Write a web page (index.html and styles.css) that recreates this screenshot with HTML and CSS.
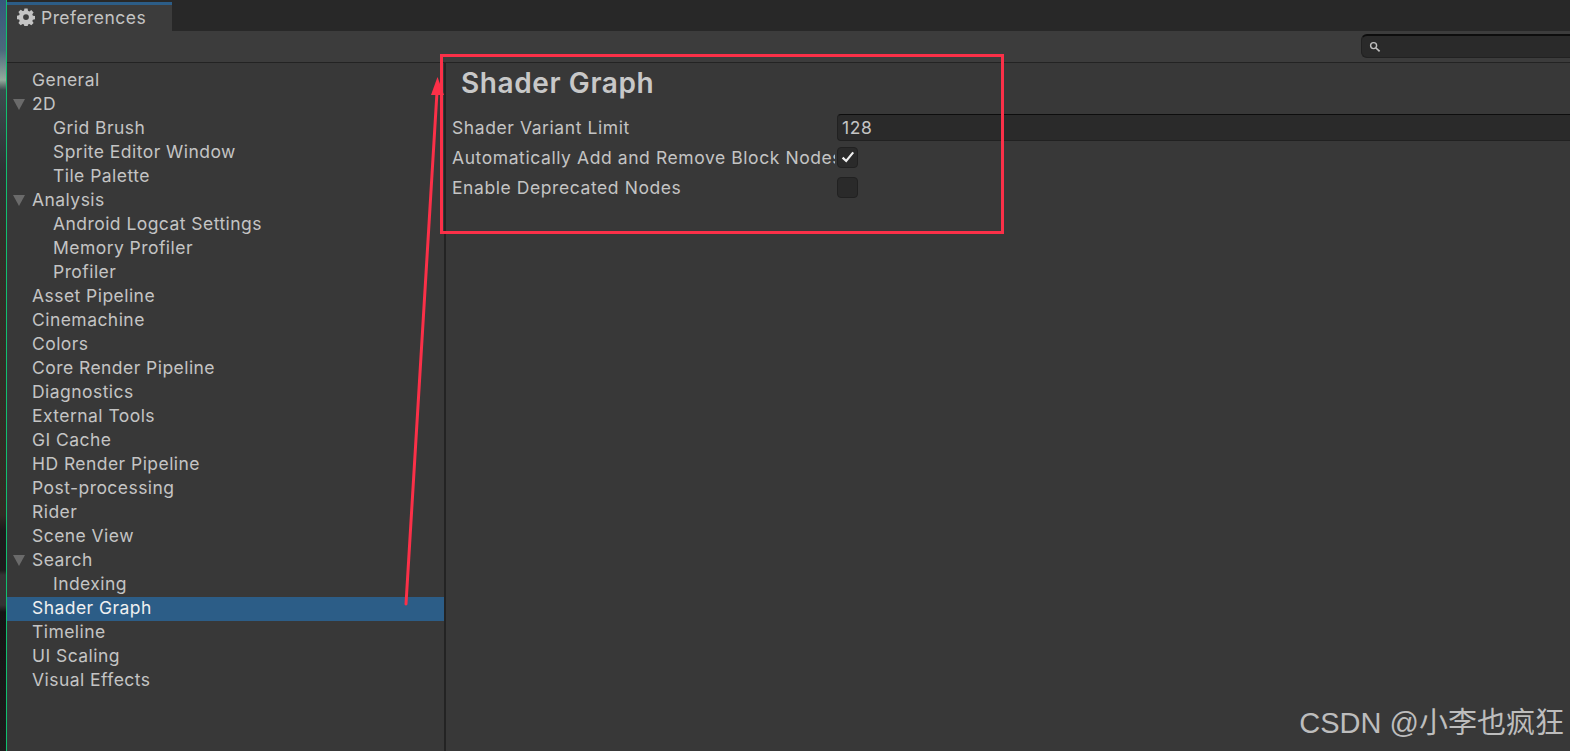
FILE: index.html
```html
<!DOCTYPE html>
<html lang="en">
<head>
    <meta charset="UTF-8">
    <title>Preferences</title>
    <link rel="stylesheet" href="styles.css">
</head>
<body>
    <div class="desktop-strip"></div>
    <div class="window">
        <div class="tab-bar">
            <div class="tab">
                <svg class="tab-icon" viewBox="0 0 18 18" width="18" height="18">
                    <path fill="#c4c4c4" fill-rule="evenodd" d="M7.4 0.5h3.2l.4 2.3 1.4.6 1.9-1.3 2.3 2.3-1.3 1.9.6 1.4 2.3.4v3.2l-2.3.4-.6 1.4 1.3 1.9-2.3 2.3-1.9-1.3-1.4.6-.4 2.3H7.4L7 16.5l-1.4-.6-1.9 1.3-2.3-2.3 1.3-1.9-.6-1.4-2.3-.4V7.7L2.1 7.3l.6-1.4L1.4 4l2.3-2.3 1.9 1.3L7 2.8zM9 6.2a2.9 2.9 0 1 0 0 5.8 2.9 2.9 0 0 0 0-5.8z"/>
                </svg>
                <span>Preferences</span>
            </div>
        </div>
        <div class="toolbar">
            <div class="search">
                <svg viewBox="0 0 12 12" width="12" height="12">
                    <circle cx="4.6" cy="4.6" r="3" fill="none" stroke="#c0c0c0" stroke-width="1.4"/>
                    <path d="M7 7l3.6 3.4" stroke="#c0c0c0" stroke-width="1.7"/>
                </svg>
            </div>
        </div>
        <div class="panes">
            <ul class="tree">
                <li class="tree-item">General</li>
                <li class="tree-item has-children">2D</li>
                <li class="tree-item child">Grid Brush</li>
                <li class="tree-item child">Sprite Editor Window</li>
                <li class="tree-item child">Tile Palette</li>
                <li class="tree-item has-children">Analysis</li>
                <li class="tree-item child">Android Logcat Settings</li>
                <li class="tree-item child">Memory Profiler</li>
                <li class="tree-item child">Profiler</li>
                <li class="tree-item">Asset Pipeline</li>
                <li class="tree-item">Cinemachine</li>
                <li class="tree-item">Colors</li>
                <li class="tree-item">Core Render Pipeline</li>
                <li class="tree-item">Diagnostics</li>
                <li class="tree-item">External Tools</li>
                <li class="tree-item">GI Cache</li>
                <li class="tree-item">HD Render Pipeline</li>
                <li class="tree-item">Post-processing</li>
                <li class="tree-item">Rider</li>
                <li class="tree-item">Scene View</li>
                <li class="tree-item has-children">Search</li>
                <li class="tree-item child">Indexing</li>
                <li class="tree-item selected">Shader Graph</li>
                <li class="tree-item">Timeline</li>
                <li class="tree-item">UI Scaling</li>
                <li class="tree-item">Visual Effects</li>
            </ul>
            <div class="settings">
                <h1>Shader Graph</h1>
                <div class="field">
                    <label>Shader Variant Limit</label>
                    <div class="text-input">128</div>
                </div>
                <div class="field">
                    <label>Automatically Add and Remove Block Nodes</label>
                    <div class="checkbox">
                        <svg viewBox="0 0 14 14" width="14" height="14">
                            <path d="M1.6 7.6l3.6 3.4 7-8.6" fill="none" stroke="#efefef" stroke-width="2.2"/>
                        </svg>
                    </div>
                </div>
                <div class="field">
                    <label>Enable Deprecated Nodes</label>
                    <div class="checkbox"></div>
                </div>
            </div>
        </div>
    </div>

    <!-- red markup drawn over the screenshot -->
    <div class="markup-box"></div>
    <svg class="markup-arrow" width="60" height="540" viewBox="0 0 60 540">
        <path d="M6 530L37 18" stroke="#fb3048" stroke-width="3" stroke-linecap="round"/>
        <path d="M37.5 3L44 21 31 21z" fill="#fb3048"/>
    </svg>
    <div class="watermark">CSDN @小李也疯狂</div>
</body>
</html>
```

FILE: styles.css
```css
* {
    margin: 0;
    padding: 0;
    box-sizing: border-box;
}

body {
    width: 1570px;
    height: 751px;
    overflow: hidden;
    display: flex;
    background-color: #383838;
    color: #c4c4c4;
    font-family: Inter, "Noto Sans", sans-serif;
    font-size: 17.5px;
    letter-spacing: 0.45px;
}

.desktop-strip {
    width: 7px;
    flex-shrink: 0;
    border-right: 1px solid #10c070;
    background: linear-gradient(to bottom, #36587c 0, #4a6a7c 50px, #93aa9c 80px, #3c4c4e 90px, #2e3234 170px, #322e28 240px, #302c24 515px, #1c1c1c 530px, #1c1c1c 570px, #343434 575px, #343434 605px, #141414 612px, #1c1c1c 751px);
}

.window {
    flex: 1;
    display: flex;
    flex-direction: column;
    min-width: 0;
}

.tab-bar {
    height: 31px;
    padding-top: 2px;
    background-color: #282828;
    flex-shrink: 0;
}

.tab {
    width: 165px;
    height: 29px;
    display: flex;
    align-items: center;
    gap: 6px;
    padding: 0 0 2px 10px;
    background-color: #3c3c3c;
    border-top: 3px solid #2c5d87;
}

.toolbar {
    height: 32px;
    flex-shrink: 0;
    display: flex;
    justify-content: flex-end;
    align-items: flex-start;
    padding-top: 3px;
    background-color: #3c3c3c;
    border-bottom: 1px solid #232323;
}

.search {
    width: 209px;
    height: 24px;
    display: flex;
    align-items: center;
    padding-left: 7px;
    background-color: #2a2a2a;
    border: 1px solid #212121;
    border-top: 2px solid #0d0d0d;
    border-right: none;
    border-radius: 6px 0 0 6px;
}

.panes {
    flex: 1;
    display: flex;
    min-height: 0;
}

.tree {
    width: 437px;
    flex-shrink: 0;
    padding-top: 6px;
    list-style: none;
}

.tree-item {
    height: 24px;
    line-height: 22px;
    padding-left: 25px;
    white-space: nowrap;
}

.tree-item.child {
    padding-left: 46px;
}

.tree-item.has-children::before {
    content: "";
    float: left;
    margin: 6px 0 0 -19px;
    border-left: 6px solid transparent;
    border-right: 6px solid transparent;
    border-top: 11px solid #6a6a6a;
}

.tree-item.selected {
    background-color: #2c5d87;
    color: #f0f0f0;
}

.settings {
    flex: 1;
    min-width: 0;
    border-left: 2px solid #232323;
    padding: 0 0 0 6px;
}

.settings h1 {
    height: 49px;
    padding: 4px 0 0 9px;
    line-height: 33px;
    font-size: 28px;
    font-weight: 600;
    letter-spacing: 0.6px;
    color: #c8c8c8;
}

.field {
    height: 30px;
    display: flex;
    align-items: center;
    letter-spacing: 0.58px;
}

.field label {
    width: 383px;
    margin-right: 2px;
    flex-shrink: 0;
    overflow: hidden;
    white-space: nowrap;
}

.text-input {
    flex: 1;
    height: 27px;
    line-height: 26px;
    padding-left: 4px;
    background-color: #2a2a2a;
    border: 1px solid #212121;
    border-top-color: #0d0d0d;
    border-right: none;
    border-radius: 4px 0 0 4px;
}

.checkbox {
    width: 21px;
    height: 21px;
    display: flex;
    align-items: center;
    justify-content: center;
    background-color: #2a2a2a;
    border: 1px solid #212121;
    border-radius: 4px;
}

.markup-box {
    position: absolute;
    left: 440px;
    top: 54px;
    width: 564px;
    height: 180px;
    border: 3px solid #fb3048;
}

.markup-arrow {
    position: absolute;
    left: 400px;
    top: 74px;
}

.watermark {
    position: absolute;
    right: 6px;
    bottom: 10px;
    font-family: "Liberation Sans", "Noto Sans CJK SC", sans-serif;
    font-size: 29px;
    letter-spacing: 0;
    color: #bdbdbd;
    white-space: nowrap;
}
```
